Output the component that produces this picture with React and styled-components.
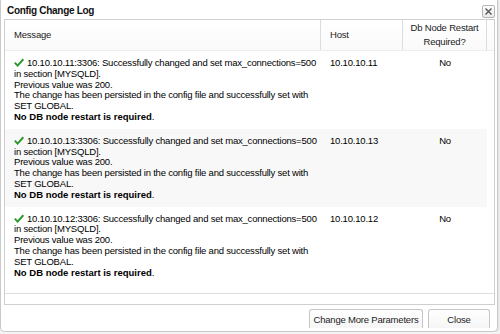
import React from 'react';
import styled, { createGlobalStyle } from 'styled-components';

const GlobalStyle = createGlobalStyle`
  html, body {
    margin: 0;
    padding: 0;
    background: #f4f4f4;
  }
  body {
    font-family: 'Liberation Sans', Arial, sans-serif;
    font-size: 9.5px;
    letter-spacing: -0.2px;
    color: #000;
  }
`;

const Dialog = styled.div`
  width: 496px;
  height: 331px;
  background: #fff;
  border: 1px solid #c9c9c9;
  border-top: none;
  border-radius: 0 0 5px 5px;
  display: flex;
  flex-direction: column;
  overflow: hidden;
  box-shadow: 1px 1px 2px rgba(0, 0, 0, 0.08);
`;

const TitleBar = styled.div`
  height: 19px;
  display: flex;
  align-items: center;
  justify-content: space-between;
  padding: 0 2px 0 6px;
  flex-shrink: 0;
`;

const Title = styled.span`
  font-weight: 700;
  font-size: 10px;
  letter-spacing: -0.3px;
  color: #111;
  padding-top: 2px;
`;

const CloseBox = styled.button`
  width: 13px;
  height: 13px;
  margin-top: 4px;
  padding: 0;
  border: 1px solid #b5b5b5;
  border-radius: 2px;
  background: linear-gradient(#fdfdfd, #e9e9e9);
  display: flex;
  align-items: center;
  justify-content: center;
`;

const Panel = styled.div`
  height: 284px;
  margin: 0 2px 0 3px;
  border: 1px solid #cfcfcf;
  display: flex;
  flex-direction: column;
  flex-shrink: 0;
`;

const Columns = '316px 82px 84px';

const HeaderRow = styled.div`
  display: grid;
  grid-template-columns: ${Columns} 1fr;
  height: 30px;
  background: linear-gradient(#ffffff, #fafafa);
  border-bottom: 1px solid #eeeeee;
  flex-shrink: 0;
`;

const HeaderCell = styled.div`
  display: flex;
  align-items: center;
  justify-content: ${(p) => (p.$center ? 'center' : 'flex-start')};
  text-align: ${(p) => (p.$center ? 'center' : 'left')};
  padding-left: ${(p) => (p.$center ? '0' : '9px')};
  line-height: 14px;
  color: #222;
  border-right: ${(p) => (p.$last ? 'none' : '1px solid #dcdcdc')};
`;

const Body = styled.div`
  flex: 1;
  padding-right: 7px;
  border-bottom: 1px solid #dddddd;
`;

const Row = styled.div`
  display: grid;
  grid-template-columns: ${Columns};
  padding: 7px 0 6px;
  line-height: 10.8px;
  background: ${(p) => (p.$alt ? '#f8f8f8' : '#fff')};
`;

const MessageCell = styled.div`
  padding-left: 9px;
  white-space: nowrap;
`;

const Strong = styled.b`
  letter-spacing: 0;
`;

const HostCell = styled.div`
  padding-left: 9px;
`;

const RestartCell = styled.div`
  text-align: center;
`;

const Check = styled.svg`
  width: 10px;
  height: 9px;
  margin-right: 3px;
  vertical-align: -1px;
`;

const PanelFooter = styled.div`
  height: 10px;
  flex-shrink: 0;
`;

const ButtonBar = styled.div`
  display: flex;
  justify-content: flex-end;
  gap: 5px;
  padding: 4px 7px 0 0;
`;

const Button = styled.button`
  width: ${(p) => p.$width}px;
  height: 19px;
  padding: 1px 0 0;
  border: 1px solid #c6c6c6;
  border-bottom: none;
  border-radius: 3px 3px 0 0;
  background: linear-gradient(#ffffff, #f6f6f6);
  font-family: 'Liberation Sans', Arial, sans-serif;
  font-size: 9.5px;
  letter-spacing: -0.2px;
  white-space: nowrap;
  color: #222;
`;

const entries = [
  { host: '10.10.10.11' },
  { host: '10.10.10.13' },
  { host: '10.10.10.12' },
];

function CheckIcon() {
  return (
    <Check viewBox="0 0 10 9">
      <path d="M0.8 4.6 L3.6 7.6 L9.3 1.2" fill="none" stroke="#2f9a2f" strokeWidth="2" />
    </Check>
  );
}

function LogRow({ host, alt }) {
  return (
    <Row $alt={alt}>
      <MessageCell>
        <CheckIcon />
        {host}:3306: Successfully changed and set max_connections=500
        <br />
        in section [MYSQLD].
        <br />
        Previous value was 200.
        <br />
        The change has been persisted in the config file and successfully set with
        <br />
        SET GLOBAL.
        <br />
        <Strong>No DB node restart is required</Strong>.
      </MessageCell>
      <HostCell>{host}</HostCell>
      <RestartCell>No</RestartCell>
    </Row>
  );
}

export default function App() {
  return (
    <>
      <GlobalStyle />
      <Dialog>
        <TitleBar>
          <Title>Config Change Log</Title>
          <CloseBox aria-label="Close">
            <svg width="9" height="9" viewBox="0 0 9 9">
              <path d="M1.5 1.5 L7.5 7.5 M7.5 1.5 L1.5 7.5" stroke="#555" strokeWidth="1.4" />
            </svg>
          </CloseBox>
        </TitleBar>
        <Panel>
          <HeaderRow>
            <HeaderCell>Message</HeaderCell>
            <HeaderCell>Host</HeaderCell>
            <HeaderCell $center>
              Db Node Restart
              <br />
              Required?
            </HeaderCell>
            <HeaderCell $last />
          </HeaderRow>
          <Body>
            {entries.map((e, i) => (
              <LogRow key={e.host} host={e.host} alt={i % 2 === 1} />
            ))}
          </Body>
          <PanelFooter />
        </Panel>
        <ButtonBar>
          <Button $width={114}>Change More Parameters</Button>
          <Button $width={62}>Close</Button>
        </ButtonBar>
      </Dialog>
    </>
  );
}
